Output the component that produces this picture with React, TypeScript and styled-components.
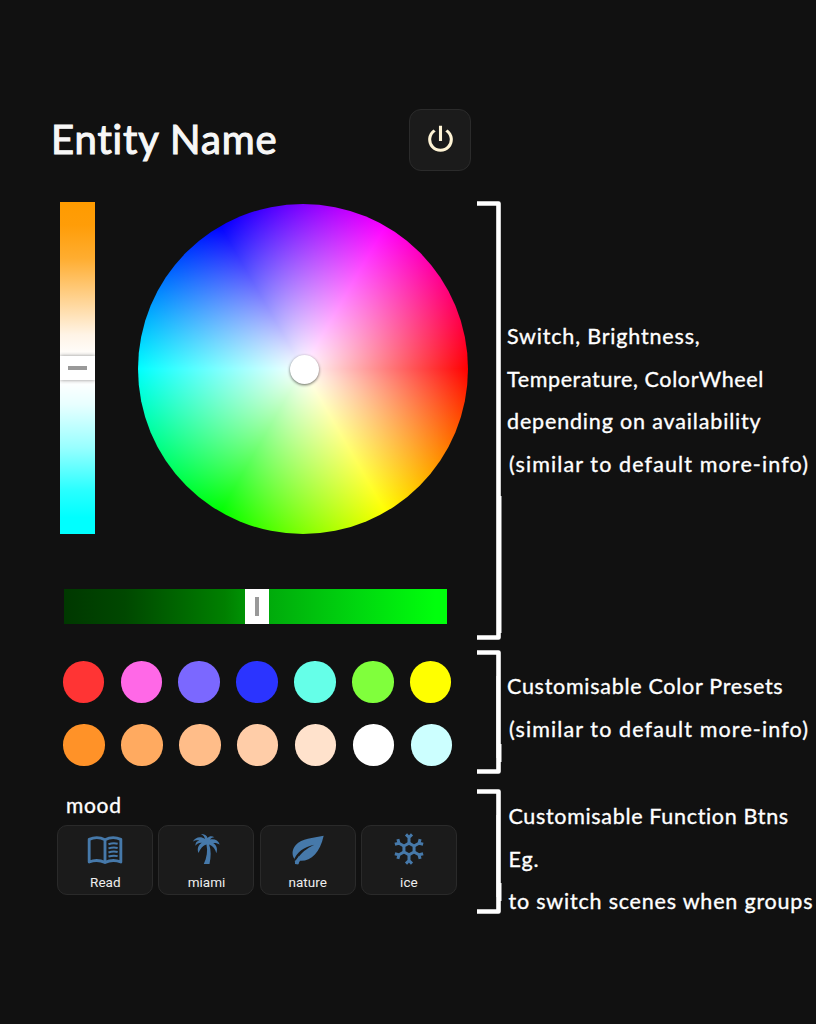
import React from "react";
import styled, { createGlobalStyle } from "styled-components";

const Global = createGlobalStyle`
  * { box-sizing: border-box; }
  body { margin: 0; background: #111; overflow: hidden; }
`;
const Page = styled.main`
  width: 816px; height: 1024px; background: #111; color: #fff;
  display: grid; grid-template-columns: 477px 339px; padding-top: 109px; overflow: hidden;
  font-family: Lato, "Liberation Sans", sans-serif;
`;
const Panel = styled.section`display: flex; flex-direction: column; min-width: 0;`;
const Header = styled.header`
  height: 62px; display: flex; align-items: flex-start; justify-content: space-between; padding: 0 6px 0 51px;
`;
const Label = styled.span<{ $size?: number; $spacing?: number; $stroke?: number; $indent?: number }>`
  display: inline-block; white-space: nowrap; font-size: ${p => p.$size ?? 21.5}px; line-height: 1;
  letter-spacing: ${p => p.$spacing ?? 0.6}px; margin-left: ${p => p.$indent ?? 0}px;
  -webkit-text-stroke: ${p => p.$stroke ?? 0.35}px currentColor;
`;
const Title = styled.h1`margin: 0; padding-top: 10px; font-size: 40px; line-height: 1; font-weight: 400; color: #f7f7f7;`;
const Power = styled.button`
  width: 62px; height: 62px; border: 1px solid #2b2b2b; border-radius: 12px; background: #1b1b1b;
  padding: 0 0 2px; display: grid; place-items: center; color: #fff4d5;
`;
const Pickers = styled.div`display: flex; align-items: flex-start; padding: 31px 0 0 60px; gap: 43px;`;
const Temperature = styled.div`
  width: 35px; height: 332px; display: grid; place-items: center;
  background: linear-gradient(#ff9b00 0%, #ff9d08 7%, #ffad30 17%, #fff4e6 40%, #fff 47%, #fff 54%, #e8ffff 61%, #98ffff 74%, #28ffff 87%, #00ffff 95%);
`;
const Thumb = styled.div<{ $vertical?: boolean }>`
  width: ${p => p.$vertical ? 24 : 35}px; height: ${p => p.$vertical ? 35 : 24}px;
  background: white; display: grid; place-items: center; box-shadow: ${p => p.$vertical ? "none" : "0 0 4px #0007"};
  clip-path: inset(-4px 0);
  &::after { content: ""; background: #999; width: ${p => p.$vertical ? 4 : 19}px; height: ${p => p.$vertical ? 19 : 4}px; }
`;
const Wheel = styled.div`
  width: 330px; height: 330px; margin-top: 1.5px; border-radius: 50%; display: grid; place-items: center;
  background: radial-gradient(circle closest-side, #fff 0%, transparent 100%),
    conic-gradient(from 90deg, #f00, #ff0 60deg, #0f0 120deg, #0ff 180deg, #00f 240deg, #f0f 300deg, #f00);
`;
const Knob = styled.div`
  width: 29px; height: 29px; margin: 2px 0 0 2px; background: white; border-radius: 50%; box-shadow: 0 1px 3px #0009;
`;
const Brightness = styled.div`
  width: 383px; height: 35px; margin: 55px 0 0 64px; padding-left: 181px;
  background: linear-gradient(90deg, #003800 0, #004800 16%, #008000 42%, #00ab0b 54%, #00d80f 77%, #00ff0c 97%);
`;
const Presets = styled.div`
  display: flex; flex-direction: column; gap: 21.7px; padding: 37.4px 0 0 62.7px; height: 143px;
`;
const PresetRow = styled.div<{ $indent?: number }>`display: flex; gap: 16.5px; padding-left: ${p => p.$indent ?? 0}px;`;
const Swatch = styled.i<{ $color: string }>`width: 41.4px; height: 41.4px; border-radius: 50%; background: ${p => p.$color};`;
const Mood = styled.h2`margin: 0; padding: 27px 0 0 66px; height: 58px; font-size: 20px; line-height: 1; font-weight: 400;`;
const Scenes = styled.div`display: flex; gap: 5.2px; padding-left: 57.3px;`;
const Scene = styled.button`
  width: 96px; height: 70px; border: 1px solid #2a2a2a; border-radius: 10px; background: #1b1b1b; color: #eee;
  display: flex; flex-direction: column; align-items: center; justify-content: flex-start; gap: 5px; padding: 4px 0 0;
  font: 13.5px/18px Roboto, sans-serif;
  svg { color: #4679aa; display: block; }
`;
const Notes = styled.aside`padding-top: 92px; display: flex; flex-direction: column;`;
const Group = styled.section<{ $height: number; $gap: number }>`
  height: ${p => p.$height}px; margin-bottom: ${p => p.$gap}px; display: flex;
`;
const Lines = styled.div<{ $top: number; $left: number }>`
  display: flex; flex-direction: column; gap: 21px; padding-top: ${p => p.$top}px; padding-left: ${p => p.$left}px;
`;

const Bracket = ({ height }: { height: number }) => (
  <svg width="25" height={height} fill="none" stroke="#fff" strokeWidth="4.6" strokeLinejoin="round">
    <path d={`M0 2.5H21.5V${height - 2.5}H0`} />
    <path d={height > 200 ? "M23 295V432" : "M21 26V108M23 94V112"} strokeWidth="3" />
  </svg>
);
const brights = ["#ff3434", "#ff68e7", "#7b68ff", "#2b34ff", "#65ffe8", "#80ff3c", "#ffff00"];
const warms = ["#ff9228", "#ffaa60", "#ffbd89", "#ffcda8", "#ffe2cc", "#ffffff", "#ccffff"];
const Icon = ({ children }: { children: React.ReactNode }) => (
  <svg width="38" height="38" viewBox="0 0 24 24" fill="currentColor">{children}</svg>
);

export default function App() {
  return <><Global /><Page>
    <Panel>
      <Header><Title><Label $size={40} $spacing={0.9} $stroke={1.1}>Entity Name</Label></Title>
        <Power aria-label="Power"><svg width="37" height="37" viewBox="0 0 24 24" fill="currentColor"><path d="M16.56 5.44 15.11 6.89A6 6 0 1 1 8.88 6.88L7.44 5.44A8 8 0 1 0 16.56 5.44ZM13 3H11V13H13Z" /></svg></Power>
      </Header>
      <Pickers><Temperature><Thumb /></Temperature><Wheel><Knob /></Wheel></Pickers>
      <Brightness><Thumb $vertical /></Brightness>
      <Presets>
        <PresetRow>{brights.map(c => <Swatch key={c} $color={c} />)}</PresetRow>
        <PresetRow $indent={0.7}>{warms.map(c => <Swatch key={c} $color={c} />)}</PresetRow>
      </Presets>
      <Mood><Label $size={21} $spacing={0.7}>mood</Label></Mood>
      <Scenes>
        <Scene><Icon><g fill="none" stroke="currentColor"><path strokeWidth="1.8" strokeLinejoin="round" d="M12 6.2C9 4.6 5 4.6 2 5.9V20.2C5 19 9 19 12 20.6 15 19 19 19 22 20.2V5.9C19 4.6 15 4.6 12 6.2ZM12 6.2V20.6" /><path strokeWidth="1.3" d="M14.2 9q3-1 5.8-.3M14.2 11.6q3-1 5.8-.3M14.2 14.2q3-1 5.8-.3M14.2 16.8q3-1 5.8-.3" /></g></Icon>Read</Scene>
        <Scene><Icon><path d="M11.4 5.7C11.1 4.2 10.2 3.2 8.8 2.5 11 2.5 12.6 3.4 13 5 14 3.9 15.6 3.6 17.3 4.5 15.8 4.7 15 5.2 14.5 6 17.4 5.4 19.8 6.6 20.7 9.2 19.3 8.3 17.9 8 16.6 8.2 18.8 9.8 19.5 12.2 18.5 14.7 18 12.3 16.6 10.3 14 9.2 15.3 13 15.2 17 14.2 21.5H10.6C12.5 17.5 13.2 13.3 12.3 9.2 10.1 9.7 8.6 11.5 7.2 14.5 6.3 11.9 7 9.7 9.3 8.1 7.6 8 6.3 8.6 5.3 10 5.2 8.2 6.1 7 7.7 6.6 6.2 6.3 5 6.5 3.7 7.4 5.1 4.5 8.7 3.7 11.4 5.7Z" /></Icon>miami</Scene>
        <Scene><Icon><path d="M21.9 3.6C15 5.1 8.1 5.2 4.3 9.4 1.4 12.6 2 16.4 3.5 18.3L3.9 21.5 5.8 21.7 6.7 19.4C13.8 19.9 19.4 14.7 21.9 3.6Z" /><path d="M2.8 19.7C4.8 13.9 9.5 10.7 16 9.3 10.8 11.9 7.8 14.2 4.8 19Z" fill="#1b1b1b" /><path d="M3.7 21.5Q4.2 18.4 6.4 16.2L7.2 18.6 5.8 21.7Z" /></Icon>nature</Scene>
        <Scene><Icon><g fill="none" stroke="currentColor" strokeWidth="1.9"><path d="M12 8.3 15.2 10.15V13.85L12 15.7 8.8 13.85V10.15Z" />{[0, 60, 120, 180, 240, 300].map(a => <path key={a} transform={`rotate(${a} 12 12)`} d="M12 8.3V4.7M10.1 2.8 12 4.7 13.9 2.8" />)}</g></Icon>ice</Scene>
      </Scenes>
    </Panel>
    <Notes>
      <Group $height={439} $gap={10}><Bracket height={439} /><Lines $top={125} $left={5}>
        <Label $spacing={0.82}>Switch, Brightness,</Label><Label $spacing={0.62}>Temperature, ColorWheel</Label><Label $spacing={0.84}>depending on availability</Label><Label $spacing={1.12} $indent={2}>(similar to default more-info)</Label>
      </Lines></Group>
      <Group $height={124} $gap={15}><Bracket height={124} /><Lines $top={26} $left={5}>
        <Label $spacing={0.72}>Customisable Color Presets</Label><Label $spacing={1.12} $indent={2}>(similar to default more-info)</Label>
      </Lines></Group>
      <Group $height={125} $gap={0}><Bracket height={125} /><Lines $top={17} $left={6.5}>
        <Label $spacing={0.67}>Customisable Function Btns</Label><Label $spacing={0.8}>Eg.</Label><Label $spacing={0.8}>to switch scenes when groups</Label>
      </Lines></Group>
    </Notes>
  </Page></>;
}
